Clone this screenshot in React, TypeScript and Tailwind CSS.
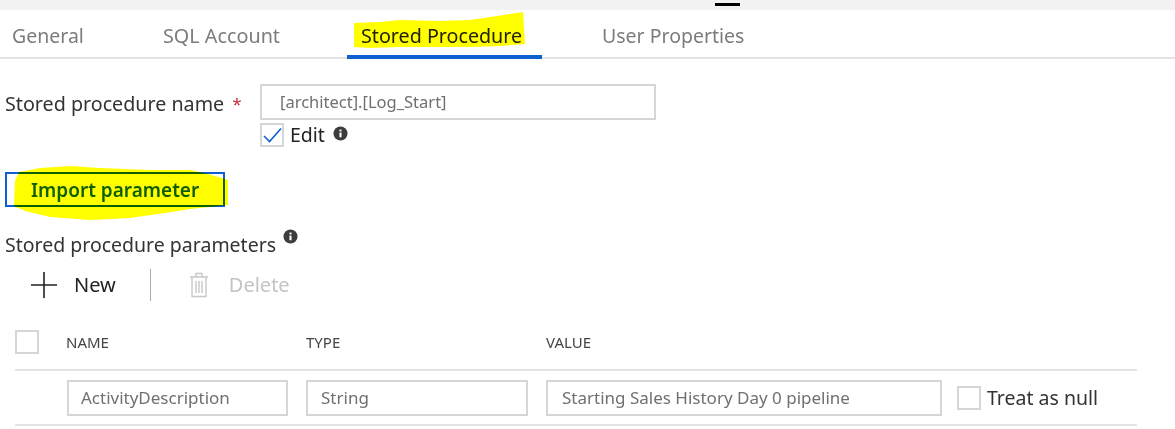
const font = "font-['Noto_Sans','Open_Sans',sans-serif]";

const InfoIcon = ({ className }: { className: string }) => (
  <svg viewBox="0 0 16 16" className={className}>
    <circle cx="8" cy="8" r="7.5" fill="#3c3c3c" />
    <rect x="6.9" y="7" width="2.2" height="5" fill="#fff" />
    <rect x="6.9" y="3.8" width="2.2" height="2" fill="#fff" />
  </svg>
);

const Checkbox = ({ checked }: { checked?: boolean }) => (
  <div className="flex h-6 w-6 items-center justify-center border-2 border-[#d6d6d6] bg-white">
    {checked && (
      <svg viewBox="0 0 20 20" className="h-5 w-5">
        <path d="M2 11 L7.5 16.5 L19 3.5" fill="none" stroke="#0f62d6" strokeWidth="1.6" />
      </svg>
    )}
  </div>
);

const Field = ({ value, width }: { value: string; width: string }) => (
  <div className={`flex h-9 items-center border-2 border-[#d6d6d6] text-[#707070] ${width}`}>
    {value}
  </div>
);

export default function App() {
  return (
    <div className={`relative h-[429px] w-[1175px] overflow-hidden bg-white text-[#333] ${font}`}>
      <div className="relative h-[10px] bg-[#f2f2f2]">
        <div className="absolute left-[715px] top-[3px] h-[3px] w-[25px] bg-black" />
      </div>

      <div className="flex h-[49px] border-b-2 border-[#e4e4e4] text-[19.5px] text-[#7c7c7c]">
        <div className="ml-3 w-[151px] pt-[11px]">General</div>
        <div className="w-[184px] pt-[11px] text-[19.8px]">SQL Account</div>
        <div className="h-[49px] w-[195px] border-b-[4px] border-[#0f5fd1] pl-[14px] pt-[11px] text-[19.7px] text-[#222]">
          Stored Procedure
        </div>
        <div className="ml-[60px] pt-[11px]">User Properties</div>
      </div>

      <div className="ml-[5px] mt-[25px] flex">
        <div className="flex h-9 w-[255px] items-center pt-1 text-[19.7px] text-[#333]">
          Stored procedure name <span className="ml-2 text-[17px] text-[#c8293a]">*</span>
        </div>
        <div>
          <Field value="[architect].[Log_Start]" width="w-[396px] pl-[18px] text-[16.5px]" />
          <div className="flex items-center">
            <Checkbox checked />
            <span className="ml-[6px] text-[19.5px] text-[#222]">Edit</span>
            <InfoIcon className="mb-[3px] ml-2 h-[15px] w-[15px]" />
          </div>
        </div>
      </div>

      <div className="ml-[5px] mt-[23px] flex h-[35px] w-[220px] items-center border-2 border-[#0f5fd1] pl-[24px] text-[19px] font-semibold text-[#0f5fd1]">
        Import parameter
      </div>

      <div className="ml-[5px] mt-[23px] flex h-7 items-center text-[19.5px] text-[#333]">
        Stored procedure parameters
        <InfoIcon className="mb-4 ml-[7px] h-[15px] w-[15px]" />
      </div>

      <div className="ml-[31px] mt-[11px] flex h-8 items-center text-[20px]">
        <svg viewBox="0 0 26 26" className="h-[26px] w-[26px]">
          <path d="M0 13 H26 M13 0 V26" stroke="#222" strokeWidth="1.6" />
        </svg>
        <span className="ml-[17px] text-[#222]">New</span>
        <div className="ml-[34px] h-8 w-px bg-[#aaa]" />
        <svg viewBox="0 0 20 26" fill="none" stroke="#c8c8c8" strokeWidth="1.4" className="ml-[38px] h-[26px] w-5">
          <path d="M1 5 H19 M7 5 V1.5 H13 V5 M3 5 V24.5 H17 V5 M7 9 V21 M10 9 V21 M13 9 V21" />
        </svg>
        <span className="ml-[20px] text-[#c4c4c4]">Delete</span>
      </div>

      <div className="ml-[15px] mt-[25px] flex h-[32px] items-center text-[15px] text-[#444]">
        <Checkbox />
        <div className="ml-[27px] w-[240px]">NAME</div>
        <div className="w-[240px]">TYPE</div>
        <div>VALUE</div>
      </div>

      <div className="ml-[15px] mt-[11px] flex h-[57px] w-[1122px] items-center border-y-2 border-[#e4e4e4] pl-[52px] text-[17px]">
        <Field value="ActivityDescription" width="w-[221px] pl-[12px]" />
        <Field value="String" width="ml-[18px] w-[222px] pl-[13px]" />
        <Field value="Starting Sales History Day 0 pipeline" width="ml-[18px] w-[396px] pl-[14px]" />
        <div className="ml-[15px]">
          <Checkbox />
        </div>
        <span className="ml-[6px] text-[19.5px] text-[#333]">Treat as null</span>
      </div>

      <svg viewBox="0 0 1175 429" className="pointer-events-none absolute left-0 top-0 h-[429px] w-[1175px] mix-blend-multiply">
        <path
          d="M354 23 L380 22 L400 20 L440 21 L470 20 L490 17 L510 14 L523 12 L525 44 L500 46 L470 47 L430 47 L400 47 L370 48 L354 47 Z"
          fill="#ffff00"
        />
        <path
          d="M15 181 L19 172 L40 168 L70 166 L100 168 L150 170 L190 170 L212 175 L228 180 L228 205 L190 209 L165 213 L130 218 L90 220 L50 217 L25 211 L14 206 Z"
          fill="#ffff00"
        />
      </svg>
    </div>
  );
}
